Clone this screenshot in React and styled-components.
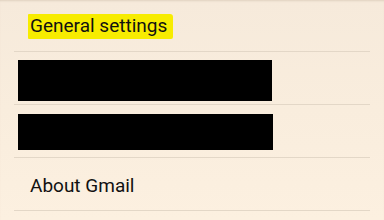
import React from 'react';
import styled, { createGlobalStyle } from 'styled-components';

const GlobalStyle = createGlobalStyle`
  html, body {
    margin: 0;
    padding: 0;
    width: 384px;
    height: 220px;
    overflow: hidden;
  }
  body {
    font-family: Roboto, "Noto Sans", sans-serif;
  }
`;

const Screen = styled.div`
  position: relative;
  width: 384px;
  height: 220px;
  background: linear-gradient(180deg, #f6eadb 0%, #f9eddd 50%, #fcf0e0 100%);
  box-shadow: inset 0 2px 2px -1px rgba(120, 100, 70, 0.18);
  overflow: hidden;
`;

const List = styled.ul`
  list-style: none;
  margin: 0;
  padding: 0 14px;
`;

const Row = styled.li`
  display: flex;
  align-items: center;
  height: ${(p) => (p.$first ? 51 : 52)}px;
  padding-left: ${(p) => (p.$redacted ? 4 : 16)}px;
  border-bottom: 1px solid #e3d7c7;
  font-size: 19px;
  color: #111;
`;

const Highlight = styled.span`
  margin-left: -2px;
  margin-top: 1px;
  padding: 3px 6px 4px 2px;
  background: #f7ec00;
  border-radius: 1px 3px 2px 1px;
  line-height: 18px;
`;

const Redaction = styled.div`
  width: ${(p) => p.$w}px;
  height: ${(p) => p.$h}px;
  margin-top: ${(p) => p.$offset}px;
  background: #000;
`;

const Label = styled.span`
  margin-top: 2px;
`;

export default function App() {
  return (
    <>
      <GlobalStyle />
      <Screen>
        <List>
          <Row $first>
            <Highlight>General settings</Highlight>
          </Row>
          <Row $redacted>
            <Redaction $w={254} $h={41} $offset={5} />
          </Row>
          <Row $redacted>
            <Redaction $w={255} $h={36} $offset={2} />
          </Row>
          <Row>
            <Label>About Gmail</Label>
          </Row>
        </List>
      </Screen>
    </>
  );
}
